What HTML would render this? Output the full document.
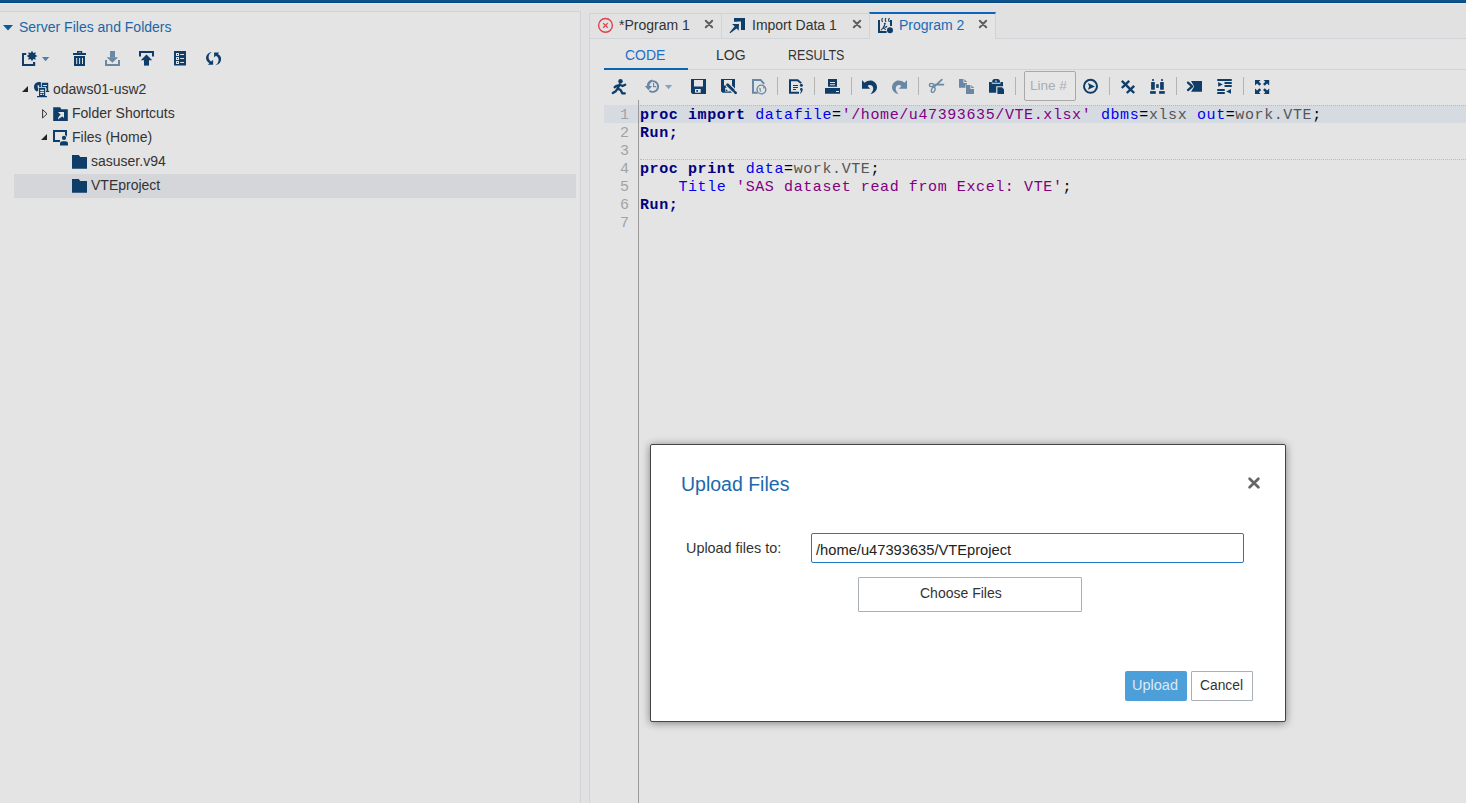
<!DOCTYPE html>
<html><head><meta charset="utf-8">
<style>
*{margin:0;padding:0;box-sizing:border-box}
html,body{width:1466px;height:803px;overflow:hidden;background:#e1e1e1;font-family:"Liberation Sans",sans-serif;position:relative}
.a{position:absolute}
.t{position:absolute;white-space:pre;font-size:14px;line-height:14px;color:#333}
svg{position:absolute;overflow:visible}
.ic{fill:#0f3d69}
.lt{fill:#6787a4}
.sep{position:absolute;width:1px;height:18px;top:77px;background:#b4b4b4}
.code{position:absolute;left:640px;white-space:pre;font-family:"Liberation Mono",monospace;font-size:15px;letter-spacing:0.6px;line-height:18px;color:#000}
.ln{position:absolute;left:604px;width:25px;text-align:right;font-family:"Liberation Mono",monospace;font-size:15px;line-height:18px;color:#a2a2a2}
.kw{color:#000080;font-weight:bold}
.bl{color:#0000f0}
.st{color:#800080}
.gy{color:#555}
</style></head><body>
<!-- top bar -->
<div class="a" style="left:0;top:0;width:1466px;height:2px;background:#0e548a"></div>
<div class="a" style="left:0;top:2px;width:1466px;height:1px;background:#034a84"></div>
<div class="a" style="left:0;top:3px;width:1466px;height:1px;background:#ebe8e6"></div>

<!-- left panel -->
<div class="a" style="left:0;top:11px;width:581px;height:792px;background:#e4e4e4;border-top:1px solid #d0d3d7;border-right:1px solid #d0d3d7"></div>
<svg style="left:0;top:0" width="20" height="40"><path d="M3 25 L13 25 L8 30.5 Z" fill="#0e5a96"/></svg>
<div class="t" style="left:19px;top:20px;color:#1d66a6">Server Files and Folders</div>

<!-- tree -->
<div class="a" style="left:14px;top:174px;width:562px;height:24px;background:#d5d6da"></div>
<div class="t" style="left:53px;top:82px">odaws01-usw2</div>
<div class="t" style="left:72px;top:106px">Folder Shortcuts</div>
<div class="t" style="left:72px;top:130px">Files (Home)</div>
<div class="t" style="left:91px;top:154px">sasuser.v94</div>
<div class="t" style="left:91px;top:178px">VTEproject</div>

<!-- right panel content -->
<div class="a" style="left:589px;top:38px;width:877px;height:765px;background:#e4e4e4;border-top:1px solid #d0d3d7;border-left:1px solid #d0d3d7"></div>
<!-- tabs -->
<div class="a" style="left:589px;top:13px;width:133px;height:25px;background:#e2e2e2;border:1px solid #d0d3d7;border-bottom:none"></div>
<div class="a" style="left:721px;top:13px;width:149px;height:25px;background:#e2e2e2;border:1px solid #d0d3d7;border-bottom:none"></div>
<div class="a" style="left:869px;top:12px;width:127px;height:27px;background:#e4e4e4;border-top:2px solid #0b66bb;border-right:1px solid #d0d3d7;border-left:1px solid #d0d3d7"></div>

<div class="t" style="left:619px;top:18px">*Program 1</div>
<div class="t" style="left:752px;top:18px">Import Data 1</div>
<div class="t" style="left:899px;top:18px;color:#1a6bb7">Program 2</div>

<!-- CODE LOG RESULTS -->
<div class="a" style="left:604px;top:69px;width:862px;height:1px;background:#d0d3d7"></div>
<div class="a" style="left:604px;top:68px;width:84px;height:2px;background:#0a63b5"></div>
<div class="t" style="left:625px;top:48px;color:#1f6fc6">CODE</div>
<div class="t" style="left:716px;top:48px">LOG</div>
<div class="t" style="left:788px;top:48px;transform:scaleX(0.887);transform-origin:0 0">RESULTS</div>

<!-- editor -->
<div class="a" style="left:604px;top:105px;width:862px;height:18px;background:#d6dbe1"></div>
<div class="a" style="left:640px;top:105px;width:826px;height:1px;border-top:1px dotted #b8bcc2"></div>
<div class="a" style="left:640px;top:159px;width:826px;height:1px;border-top:1px dotted #b8bcc2"></div>
<div class="a" style="left:638px;top:100px;width:1px;height:703px;background:#9a9a9a"></div>

<div class="ln" style="top:107px">1</div>
<div class="ln" style="top:125px">2</div>
<div class="ln" style="top:143px">3</div>
<div class="ln" style="top:161px">4</div>
<div class="ln" style="top:179px">5</div>
<div class="ln" style="top:197px">6</div>
<div class="ln" style="top:215px">7</div>
<div class="code" style="top:107px"><span class="kw">proc import</span> <span class="bl">datafile</span>=<span class="st">'/home/u47393635/VTE.xlsx'</span> <span class="bl">dbms</span>=<span class="gy">xlsx</span> <span class="bl">out</span>=<span class="gy">work.VTE</span>;</div>
<div class="code" style="top:125px"><span class="kw">Run;</span></div>
<div class="code" style="top:161px"><span class="kw">proc print</span> <span class="bl">data</span>=<span class="gy">work.VTE</span>;</div>
<div class="code" style="top:179px">    <span class="bl">Title</span> <span class="st">'SAS dataset read from Excel: VTE'</span>;</div>
<div class="code" style="top:197px"><span class="kw">Run;</span></div>

<!-- toolbar separators -->
<div class="sep" style="left:777px"></div>
<div class="sep" style="left:814px"></div>
<div class="sep" style="left:851px"></div>
<div class="sep" style="left:918px"></div>
<div class="sep" style="left:1015px"></div>
<div class="sep" style="left:1109px"></div>
<div class="sep" style="left:1176px"></div>
<div class="sep" style="left:1243px"></div>
<div class="a" style="left:1024px;top:71px;width:52px;height:30px;border:1px solid #a9a9a9;border-radius:2px;background:#e6e6e6"></div>
<div class="t" style="left:1030px;top:79px;color:#a7adb5;font-size:13.5px">Line #</div>

<!-- ICONS -->
<svg style="left:0;top:0" width="1466" height="803" viewBox="0 0 1466 803">
<g fill="#0f3d69">
<!-- left toolbar: new -->
<path d="M22 53h4.2v2h-2.2v9h9v-2h2.2v4H22z"/>
<path d="M32 50.8l1.3 2.2 2.4-.8-.5 2.5 2.2 1.3-2.2 1.3.5 2.5-2.4-.8-1.3 2.2-1.3-2.2-2.4.8.5-2.5-2.2-1.3 2.2-1.3-.5-2.5 2.4.8z"/>
<!-- trash -->
<path d="M77 51h5.2v2.6h-1.4v-1.2h-2.4v1.2H77z"/>
<rect x="73" y="53" width="13" height="2"/>
<path fill-rule="evenodd" d="M74 56h11v10H74z M76.2 58v6h1v-6z M79.1 58v6h1v-6z M82 58v6h1v-6z"/>
<!-- upload -->
<path d="M139 51h15v5.5h-2v-3.5h-11v3.5h-2z"/>
<path d="M140.8 60.2L146.5 54.4 152.2 60.2z"/>
<rect x="144" y="59.8" width="5" height="5.8"/>
<!-- list -->
<path fill-rule="evenodd" d="M174 51h12v14.6H174z M176 53h3v3h-3z M176 57h3v3h-3z M176 61h3v3h-3z M180.2 54v1h3.8v-1z M180.2 58v1h3.8v-1z M180.2 62v1h3.8v-1z"/>
<rect x="177" y="54" width="1" height="1"/><rect x="177" y="58" width="1" height="1"/><rect x="177" y="62" width="1" height="1"/>
<!-- refresh -->
<path id="rf" d="M211.8 52C207.6 52.6 205.4 56 206.3 59.6 206.9 61.6 208.2 62.6 209.4 63.2L207.9 64.8H213.1V59.7L211.3 61.4C209.6 60.6 208.5 59 208.6 57 208.7 54.8 209.9 53 211.8 52Z"/>
<path d="M211.8 52C207.6 52.6 205.4 56 206.3 59.6 206.9 61.6 208.2 62.6 209.4 63.2L207.9 64.8H213.1V59.7L211.3 61.4C209.6 60.6 208.5 59 208.6 57 208.7 54.8 209.9 53 211.8 52Z" transform="rotate(180 213.6 58.6)"/>
<!-- server icon -->
<path fill-rule="evenodd" d="M38.6 82a4.8 4.8 0 0 0-4.6 5c0 2.2 1.2 3.8 2.8 4.4L41 89.5V82.2c-.8-.1-1.6-.2-2.4-.2z M37.6 85.2h1.5v2.4h-1.5z"/>
<rect x="40.9" y="81.9" width="9" height="10.9" fill="#e4e4e4"/>
<path fill-rule="evenodd" d="M41.8 82.8h6.4v8h1v1.2h-3.8v-1.2h1.2V88.2H41.8z M43.1 84.9v1.2h3.8v-1.2z"/>
<rect x="38.2" y="87" width="7.8" height="9.6" fill="#e4e4e4"/>
<rect x="36.3" y="95.4" width="11.4" height="2.4" fill="#e4e4e4"/>
<path fill-rule="evenodd" d="M39 87.8h6.2v8.2h1.8v1.2H37V96h2z M40.2 89.8v1.1h3.8v-1.1z M40.2 91.8v1.1h3.8v-1.1z M40.2 93.8v1.1h1.9v-1.1z M42.9 93.8v1.1h1.1v-1.1z"/>
<!-- folder shortcut -->
<path fill-rule="evenodd" d="M53.2 107.3h6.9l1.2 1.9h6.5V121H53.2z M58 112h6v6l-1.6-1.6c-1.8 1-3.3 2-4.2 3.2-.4-1.3.2-3 2.5-4.8z"/>
<!-- files home -->
<path fill-rule="evenodd" d="M53 130h14v7h-2v-5H55v8h5v2H53z"/>
<circle cx="64" cy="137.9" r="3" fill="#e4e4e4"/>
<path d="M59.2 146.2v-2.8c0-2 1.6-3 3.4-3h2.8c1.8 0 3.4 1 3.4 3v2.8z" fill="#e4e4e4"/>
<circle cx="64" cy="137.9" r="2.1"/>
<path d="M60 145.4v-2c0-1.5 1.2-2.2 2.6-2.2h2.8c1.4 0 2.6.7 2.6 2.2v2z"/>
<!-- folders -->
<path d="M72 155h6.8l1.4 2H87v11.8H72z"/>
<path d="M72 179h6.8l1.4 2H87v11.8H72z"/>
</g>
<!-- light icons left -->
<g fill="#6a88a2">
<rect x="110" y="51" width="5" height="6.5"/>
<path d="M106.7 57.2H118.1L112.4 62.8z"/>
<path d="M105 60h2v4.1h11V60h2v6h-15z"/>
</g>
<path d="M42 57h7.2l-3.6 4.2z" fill="#4f7fae"/>
<!-- tree triangles -->
<path d="M22 92H28V86z" fill="#242424"/>
<path d="M42.6 109.6L47 113.8 42.6 118z" fill="none" stroke="#2a2a2a" stroke-width="0.95"/>
<path d="M41 140H47V134z" fill="#242424"/>

<!-- tabs -->
<circle cx="605.5" cy="25.4" r="6.9" fill="none" stroke="#e0424b" stroke-width="1.4"/>
<path d="M603.2 23.1L607.8 27.7M607.8 23.1L603.2 27.7" stroke="#e0424b" stroke-width="1.3"/>
<g stroke="#5f5f5f" stroke-width="2" stroke-linecap="round">
<path d="M705.8 20.8L712.2 27.2M712.2 20.8L705.8 27.2"/>
<path d="M853.8 20.8L860.2 27.2M860.2 20.8L853.8 27.2"/>
<path d="M979.8 20.8L986.2 27.2M986.2 20.8L979.8 27.2"/>
</g>
<g fill="#0f3d69">
<path d="M734 18h11v12h-4v-8.4h-3.6v.2H734z"/>
<path d="M732 24L739 24 738.7 30.8 736.6 28.5 730.2 33.2 729.6 32.6 734.7 26.3z"/>
<!-- program 2 icon -->
<path d="M878 20h2v11h6.6v2H878z"/>
<rect x="890" y="20" width="2" height="6"/>
<circle cx="890" cy="30.2" r="3"/>
<path d="M882.8 18.2c-1.3.6-1.3 3 0 3.6 M886.2 18.2c-1.3.6-1.3 3 0 3.6 M889.6 18.2c-1.3.6-1.3 3 0 3.6" fill="none" stroke="#0f3d69" stroke-width="1.1"/>
<circle cx="884.8" cy="23.7" r="1"/>
<path d="M884.6 25l-1.6 3-1.8 2 M883.6 26.5l2.2.8 1-1 M883.4 28l2 1.4" fill="none" stroke="#0f3d69" stroke-width="1.1" stroke-linecap="round"/>
</g>

<!-- editor toolbar -->
<g fill="#0f3d69">
<!-- run -->
<circle cx="620.5" cy="81.3" r="2.2"/>
<path d="M619.8 84.2L617.6 88.6 M619.2 85.2L616 86.2 614.6 87.2 M620.4 85L622.6 86 625.2 84.8 M617.6 88.6L615.8 91.2 612.8 93 M617.8 88.6L620.6 90 622.4 93.4 624.8 93.4" fill="none" stroke="#0f3d69" stroke-width="2.3" stroke-linecap="round" stroke-linejoin="round"/>
<!-- save -->
<path fill-rule="evenodd" d="M691 79h15v15h-13.5L691 92.5z M694 80v6.6h9V80z M695 89v3.8h5.7V89z"/>
<rect x="696.3" y="90" width="1.7" height="1.8"/>
<!-- save as -->
<path fill-rule="evenodd" d="M721 79h14v13.8H722.5L721 91.3z M724 80v5.6h8V80z M725 87.7v3.9h4.7v-3.9z"/>
<path d="M725.6 88.8v2.3h2.3z"/>
<path d="M727.4 84.6L736.2 93.4" stroke="#e4e4e4" stroke-width="5.2"/>
<path d="M727.6 84.8L733.4 90.6" stroke="#0f3d69" stroke-width="2.8" stroke-linecap="round"/>
<path d="M734.9 92.1L735.7 92.9" stroke="#0f3d69" stroke-width="2.6" stroke-linecap="round"/>
<!-- format -->
<path d="M789 79.2h9l3.8 3.4-1.2 1.1-3.4-2.5H791V91.8h8v2h-10z"/>
<path d="M793 85h5v1.1h-5z M793 87h5v1.1h-5z M793 89h3v1.1h-3z"/>
<circle cx="801.4" cy="85.3" r="1.5"/>
<path d="M800.4 88.3a1.4 1.4 0 0 1 2.3 .8c.1 1.8-.8 3.6-2.3 4.7l-.4-.3c.7-.9 1-1.8 .9-2.7-.9-.3-1.1-1.9-.5-2.5z"/>
<!-- print -->
<path fill-rule="evenodd" d="M828 79h9v7.8h-9z M830 82h5v1h-5z M830 84.2h5v1h-5z"/>
<path fill-rule="evenodd" d="M825 88h15v5.8h-15z M836 91h3v1h-3z"/>
<!-- undo -->
<path d="M862 80L864.5 82.7C866.5 81 869 80.3 871 80.5 875 81 877 84.5 877 87.5 877 90.5 874 93.5 870.5 94 872.5 92 873.4 90 873.2 88 873 86 871.5 85 870 85 869 85 868.2 85.5 867.6 86L870.2 88.8H862Z"/>
<!-- paste -->
<path fill-rule="evenodd" d="M992.2 82.7v-1.2c0-1.3 1-2.5 2.4-2.5h3c1.4 0 2.4 1.2 2.4 2.5v1.2z M995.2 80.4v1.3h1.5v-1.3z"/>
<path d="M989 81.9h2.8v1.8h8.6v-1.8h2.6v4.4h-6.8v6.5H989z"/>
<path d="M997.4 87.2h4.6l2 2V94h-6.6z"/>
<!-- goto -->
<circle cx="1090.5" cy="86.3" r="6.5" fill="none" stroke="#0f3d69" stroke-width="2"/>
<path d="M1087.9 83L1095 86.5 1087.9 89.8 1089.1 86.5z"/>
<!-- clear -->
<path d="M1121.8 80.8L1129.2 88 M1129.2 80.8L1121.8 88 M1126.8 85.8L1134.2 93 M1134.2 85.8L1126.8 93" fill="none" stroke="#0f3d69" stroke-width="2.4"/>
<!-- binoculars -->
<circle cx="1153" cy="80" r="1.1"/><circle cx="1162" cy="80" r="1.1"/>
<rect x="1151.1" y="82.1" width="3.7" height="7.6" rx=".5"/>
<rect x="1160.1" y="82.1" width="3.7" height="7.6" rx=".5"/>
<rect x="1150.1" y="91.1" width="5.7" height="2.7"/>
<rect x="1159.1" y="91.1" width="5.7" height="2.7"/>
<rect x="1156.2" y="84.2" width="2.5" height="3.7"/>
<!-- submit -->
<path d="M1188 82.6L1192.2 86.4 1188 90.1" fill="none" stroke="#0f3d69" stroke-width="2.3" stroke-linecap="round" stroke-linejoin="round"/>
<path d="M1191 81.1H1202V91.8H1191L1194.2 86.4z"/>
<!-- indent -->
<rect x="1217" y="79" width="15" height="2" rx="1"/>
<path d="M1218.1 82.1L1222.8 84.5 1218.1 86.8z"/>
<rect x="1224.3" y="82.1" width="7.7" height="1.9" rx=".9"/>
<rect x="1224.3" y="85.1" width="7.7" height="1.9" rx=".9"/>
<rect x="1217" y="89.1" width="8" height="1.8" rx=".9"/>
<rect x="1217" y="92.1" width="8" height="1.9" rx=".9"/>
<path d="M1231 89.1L1226.2 91.4 1231 93.8z"/>
<!-- maximize -->
<g id="mx">
<path d="M1255 80H1260.6L1258.9 81.7 1261.2 84 1259.4 85.8 1257.1 83.5 1255 85.6Z"/>
</g>
<path d="M1255 80H1260.6L1258.9 81.7 1261.2 84 1259.4 85.8 1257.1 83.5 1255 85.6Z" transform="translate(2524.2 0) scale(-1 1)"/>
<path d="M1255 80H1260.6L1258.9 81.7 1261.2 84 1259.4 85.8 1257.1 83.5 1255 85.6Z" transform="translate(0 174) scale(1 -1)"/>
<path d="M1255 80H1260.6L1258.9 81.7 1261.2 84 1259.4 85.8 1257.1 83.5 1255 85.6Z" transform="translate(2524.2 174) scale(-1 -1)"/>
</g>
<g fill="#6787a4">
<!-- history -->
<path d="M652.4 80.2a6.3 6.3 0 1 1 -3.6 11.2l1.1-1.4a4.5 4.5 0 1 0 2.5 -8z"/>
<path d="M652.6 79.8c-3.4 0-5.6 2.6-5.8 6.4h2.6c.2-2.4 1.4-4 3.2-4.4z"/>
<path d="M644.8 86L652.2 86 648.5 90.2z"/>
<path d="M653 83.1h1.1v3h2.2v1.1H653z"/>
<path d="M665 85h7.2l-3.6 4.2z" fill="#87a3c0"/>
<!-- save web -->
<path d="M752 79h9l3.9 4.2-1.4 1.2-3.3-3.4H754V91.7h2.6l1.5 2H752z"/>
<circle cx="761.4" cy="89.5" r="4.4" fill="none" stroke="#6787a4" stroke-width="1.4"/>
<path d="M759.2 87.6l1.8 1.2-.4 1.4 1 1.6-1.8-.4z M762.8 86.2l1.6.2.3 1.8-1.2.6z"/>
<!-- redo -->
<path d="M862 80L864.5 82.7C866.5 81 869 80.3 871 80.5 875 81 877 84.5 877 87.5 877 90.5 874 93.5 870.5 94 872.5 92 873.4 90 873.2 88 873 86 871.5 85 870 85 869 85 868.2 85.5 867.6 86L870.2 88.8H862Z" transform="translate(1769 0) scale(-1 1)"/>
<!-- copy -->
<path d="M959 79h4.4v4.1h3.6v1.4h-1.5v3.2H959z"/>
<path d="M964.3 79.2l2.9 2.9h-2.9z"/>
<path d="M966 85h4.4v4.1h3.6V94H966z"/>
<path d="M971.3 85.2l2.9 2.9h-2.9z"/>
</g>
<path fill="none" stroke="#6787a4" stroke-width="1.7" stroke-linecap="round" d="M934.6 86.4L941.8 79.6 M935 84.6H943.4"/>
<ellipse cx="931.5" cy="85" rx="2.1" ry="1.6" fill="none" stroke="#6787a4" stroke-width="1.3"/>
<ellipse cx="933.2" cy="89.8" rx="1.7" ry="2.7" fill="none" stroke="#6787a4" stroke-width="1.3" transform="rotate(22 933.2 89.8)"/>
</svg>


<!-- dialog -->
<div class="a" style="left:650px;top:444px;width:636px;height:278px;background:#fff;border:1px solid #454545;border-radius:2px;box-shadow:0 1px 9px rgba(0,0,0,0.45)"></div>
<div class="t" style="left:681px;top:474px;font-size:19.5px;line-height:20px;color:#1a69ad">Upload Files</div>
<svg style="left:1247px;top:476px" width="14" height="14"><path d="M2.6 2.7 L11.4 11.3 M11.4 2.7 L2.6 11.3" stroke="#666" stroke-width="2.7" stroke-linecap="round"/></svg>
<div class="t" style="left:686px;top:541px;font-size:14.4px">Upload files to:</div>
<div class="a" style="left:811px;top:533px;width:433px;height:30px;border:1px solid #1f78c8;border-radius:2px;background:#fff"></div>
<div class="t" style="left:816px;top:543px;font-size:14.7px;color:#222">/home/u47393635/VTEproject</div>
<div class="a" style="left:858px;top:577px;width:224px;height:35px;border:1px solid #a8afb9;border-radius:1px;background:#fff"></div>
<div class="t" style="left:920px;top:586px">Choose Files</div>
<div class="a" style="left:1125px;top:671px;width:62px;height:30px;background:#4d9fd9;border-radius:2px"></div>
<div class="t" style="left:1132px;top:678px;font-size:14.5px;color:#dce9f5">Upload</div>
<div class="a" style="left:1191px;top:671px;width:62px;height:30px;border:1px solid #a8afb9;border-radius:1px;background:#fff"></div>
<div class="t" style="left:1200px;top:679px;font-size:13.8px">Cancel</div>

</body></html>
